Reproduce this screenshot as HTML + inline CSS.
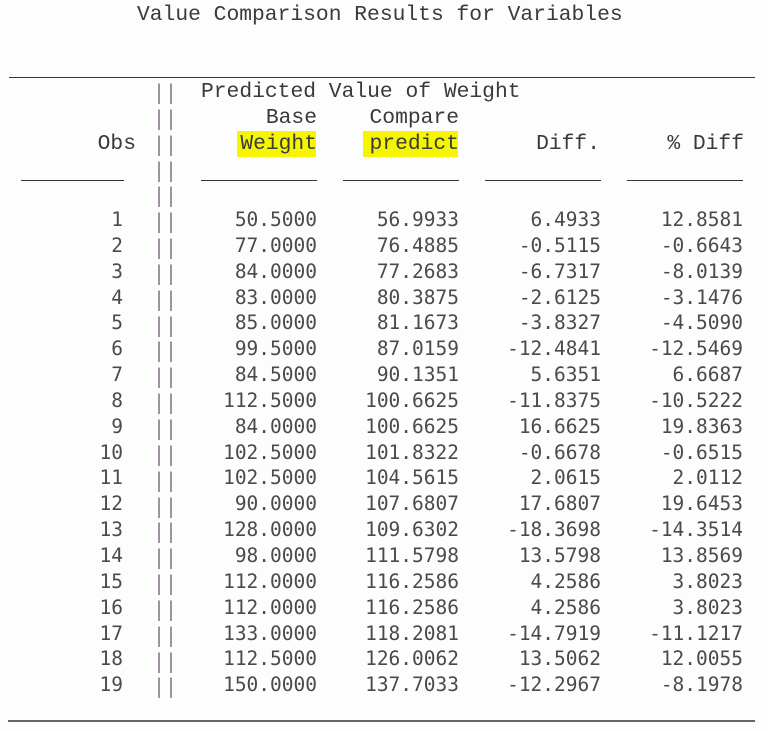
<!DOCTYPE html>
<html><head><meta charset="utf-8"><style>
body{margin:0;width:768px;height:731px;background:#fdfdfe;position:relative;overflow:hidden}
.t{position:absolute;font-family:"Liberation Mono",monospace;font-size:21.3px;line-height:26px;color:#3a3a3a;white-space:pre}
.d{position:absolute;font-family:"DejaVu Sans Mono",monospace;font-size:19.5px;line-height:25.85px;color:#4a4a4a;white-space:pre;text-align:right}
.r{text-align:right}
.hl{background:#f5f500}
.line{position:absolute;background:#333;height:1px}
.bar{position:absolute;font-family:"DejaVu Sans Mono",monospace;font-size:20px;line-height:25.85px;color:#8f7f92;white-space:pre}
</style></head><body>
<div class="t" style="left:137px;top:2px">Value Comparison Results for Variables</div>
<div class="line" style="left:9px;width:746px;top:77px"></div>
<div class="t" style="left:201px;top:79px">Predicted Value of Weight</div>
<div class="t r" style="left:200px;width:117px;top:105px">Base</div>
<div class="t r" style="left:340px;width:119px;top:105px">Compare</div>
<div class="t r" style="left:60px;width:76px;top:131px">Obs</div>
<div style="position:absolute;left:237px;top:131px;width:79px;height:26px" class="hl"></div>
<div style="position:absolute;left:363px;top:131px;width:95px;height:26px" class="hl"></div>
<div class="t r" style="left:200px;width:117px;top:131px">Weight</div>
<div class="t r" style="left:340px;width:119px;top:131px">predict</div>
<div class="t r" style="left:480px;width:120px;top:131px">Diff.</div>
<div class="t r" style="left:620px;width:124px;top:131px">% Diff</div>
<div class="line" style="left:21px;width:103px;top:180px"></div>
<div class="line" style="left:201px;width:116px;top:180px"></div>
<div class="line" style="left:343px;width:116px;top:180px"></div>
<div class="line" style="left:485px;width:116px;top:180px"></div>
<div class="line" style="left:627px;width:116px;top:180px"></div>
<div class="bar" style="left:153px;top:80px">||
||
||
||
||
||
||
||
||
||
||
||
||
||
||
||
||
||
||
||
||
||
||
||</div>
<div class="d" style="left:60px;width:63px;top:207px">1
2
3
4
5
6
7
8
9
10
11
12
13
14
15
16
17
18
19</div>
<div class="d" style="left:190px;width:127px;top:207px">50.5000
77.0000
84.0000
83.0000
85.0000
99.5000
84.5000
112.5000
84.0000
102.5000
102.5000
90.0000
128.0000
98.0000
112.0000
112.0000
133.0000
112.5000
150.0000</div>
<div class="d" style="left:330px;width:129px;top:207px">56.9933
76.4885
77.2683
80.3875
81.1673
87.0159
90.1351
100.6625
100.6625
101.8322
104.5615
107.6807
109.6302
111.5798
116.2586
116.2586
118.2081
126.0062
137.7033</div>
<div class="d" style="left:470px;width:131px;top:207px">6.4933
-0.5115
-6.7317
-2.6125
-3.8327
-12.4841
5.6351
-11.8375
16.6625
-0.6678
2.0615
17.6807
-18.3698
13.5798
4.2586
4.2586
-14.7919
13.5062
-12.2967</div>
<div class="d" style="left:610px;width:133px;top:207px">12.8581
-0.6643
-8.0139
-3.1476
-4.5090
-12.5469
6.6687
-10.5222
19.8363
-0.6515
2.0112
19.6453
-14.3514
13.8569
3.8023
3.8023
-11.1217
12.0055
-8.1978</div>
<div class="line" style="left:8px;width:747px;top:720px;height:2px;background:#666"></div>
</body></html>
